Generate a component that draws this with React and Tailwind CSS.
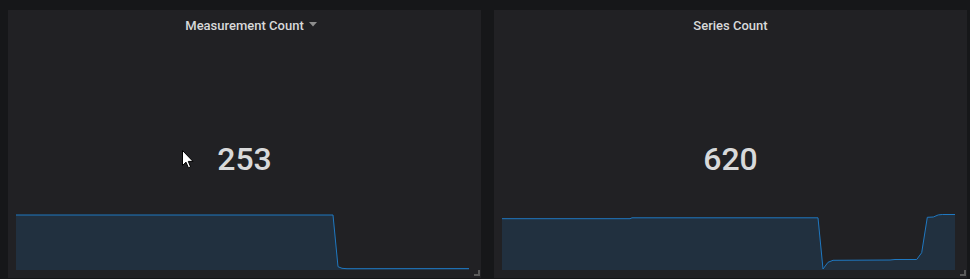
import React from 'react';

const panels = [
  {
    title: 'Measurement Count',
    value: '253',
    menu: true,
    points: [
      [0, 1], [317, 1], [322, 52.7], [326, 54.3], [331, 54.7], [453, 54.6],
    ],
  },
  {
    title: 'Series Count',
    value: '620',
    menu: false,
    points: [
      [0, 4.7], [128, 4.7], [130, 3.8], [316, 3.8], [321, 55], [326, 48.3],
      [331, 46.3], [388, 46], [393, 45.5], [414.7, 45.5], [419.7, 38.7],
      [425.3, 3.3], [431.3, 3], [436.3, 0.9], [440.3, 0.5], [453, 0.5],
    ],
  },
];

const Sparkline = ({ points }) => {
  const line = points.map(([x, y]) => `${x},${y}`).join(' ');
  const area = `0,56 ${line} 453,56`;
  return (
    <svg width="453" height="56" viewBox="0 0 453 56" className="block">
      <polygon points={area} fill="rgba(31,118,189,0.18)" />
      <polyline points={line} fill="none" stroke="#1f78c1" strokeWidth="1" />
    </svg>
  );
};

const Cursor = () => (
  <svg width="12" height="19" viewBox="0 0 12 19" className="absolute left-[174px] top-[140px]">
    <path d="M0.5 0.5 L0.5 15.5 L4 12.2 L6.4 17.8 L8.6 16.9 L6.3 11.4 L11 11.4 Z" fill="#fff" stroke="#000" strokeWidth="1" strokeLinejoin="round" />
  </svg>
);

const Panel = ({ title, value, menu, points, cursor }) => (
  <div className="relative flex h-[268px] w-[473px] flex-col bg-[#212124]">
    <div className="flex h-[30px] items-center justify-center pt-[1px]">
      <span className="relative text-[13px] font-medium text-[#d8d9da]">
        {title}
        {menu && (
          <svg width="8" height="5" viewBox="0 0 8 5" className="absolute left-full top-[6px] ml-[5px]">
            <path d="M0 0 L8 0 L4 4.5 Z" fill="#8e8e8e" />
          </svg>
        )}
      </span>
    </div>
    <div className="grid flex-1">
      <div className="col-start-1 row-start-1 self-center justify-self-center pb-[1px] text-[32px] font-medium leading-none text-[#d8d9da]">
        {value}
      </div>
      <div className="col-start-1 row-start-1 self-end pb-[8px] pl-[8px]">
        <Sparkline points={points} />
      </div>
    </div>
    {cursor && <Cursor />}
    <svg width="6" height="6" viewBox="0 0 6 6" className="absolute bottom-[2px] right-[1px]">
      <path d="M4 0 H6 V6 H0 V4 H4 Z" fill="#5a5a5a" />
    </svg>
  </div>
);

export default function App() {
  return (
    <div className="flex h-[279px] w-[970px] gap-[13px] bg-[#161719] pl-[8px] pt-[10px] font-['Roboto',sans-serif]">
      {panels.map((p, i) => (
        <Panel key={p.title} {...p} cursor={i === 0} />
      ))}
    </div>
  );
}
